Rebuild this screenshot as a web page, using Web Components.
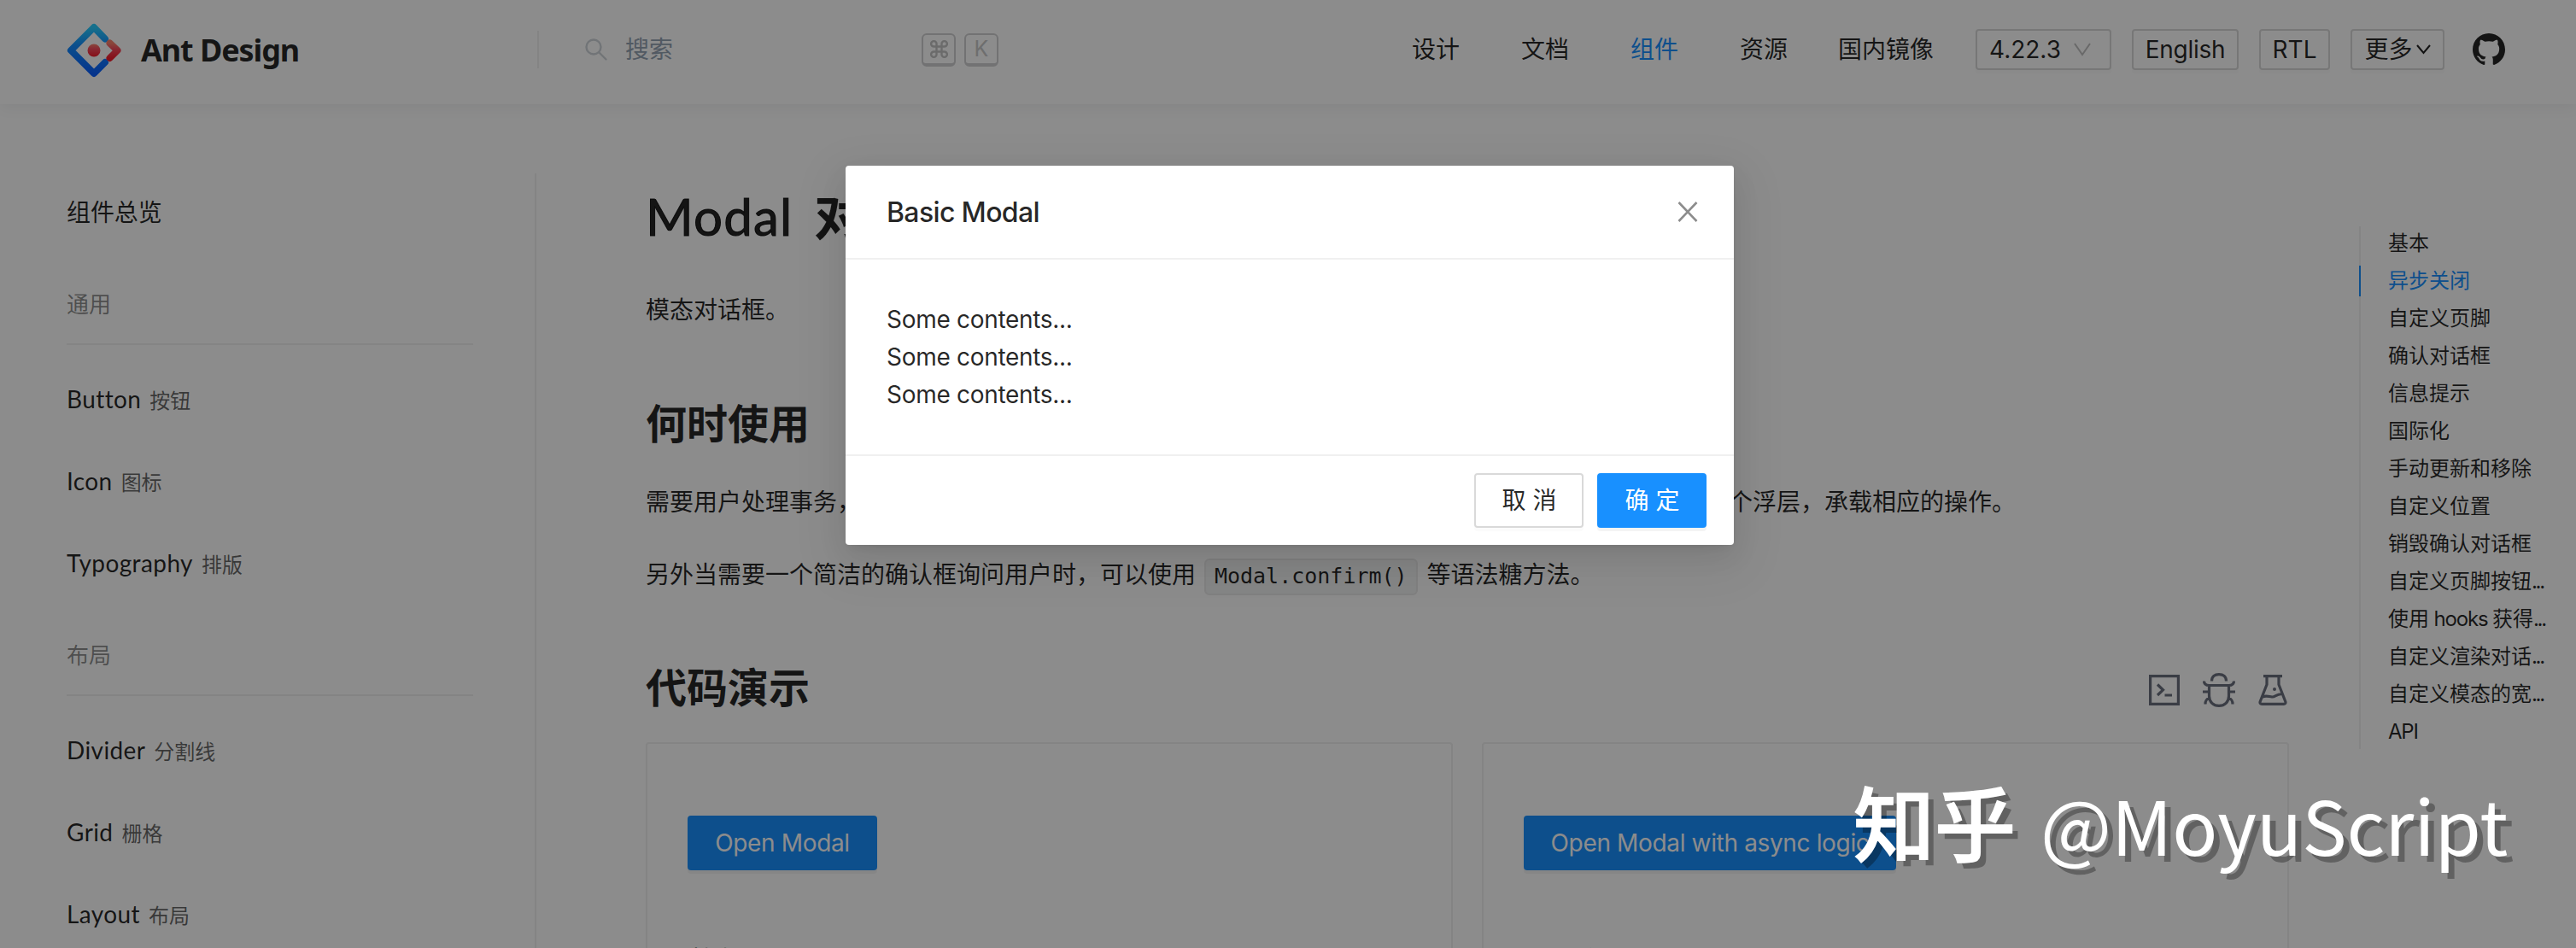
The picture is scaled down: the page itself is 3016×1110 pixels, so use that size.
<!DOCTYPE html>
<html lang="zh-CN">
<head>
<meta charset="utf-8">
<title>Modal 对话框 - Ant Design</title>
<style>
    html, body {
        margin: 0;
        height: 1110px;
        overflow: hidden;
        background: #fff;
    }
    body {
        position: relative;
        font-family: Inter, "Noto Sans CJK SC", sans-serif;
        font-size: 28px;
        line-height: 44px;
        color: rgba(0, 0, 0, .85);
    }
</style>
</head>
<body>
<docs-page></docs-page>
<modal-mask>
    <basic-modal>
        <span slot="title">Basic Modal</span>
        <div>Some contents...</div>
        <div>Some contents...</div>
        <div>Some contents...</div>
    </basic-modal>
</modal-mask>
<water-mark></water-mark>

<script>
const define = (name, html, setup) => {
    const template = document.createElement("template")
    template.innerHTML = html
    customElements.define(name, class extends HTMLElement {
        constructor() {
            super()
            this.attachShadow({ mode: "open" })
            this.shadowRoot.appendChild(template.content.cloneNode(true))
        }
        connectedCallback() {
            if (setup) setup(this, this.shadowRoot)
        }
    })
}

/* ---------- header ---------- */

define("site-logo", /*html*/`
<style>
    :host {
        display: flex;
        align-items: center;
        width: 551px;
        padding: 2px 0 0 78px;
        box-sizing: content-box;
        font: 700 36px/60px "Noto Sans", sans-serif;
        letter-spacing: -1.1px;
    }
    svg { margin-right: 23px; }
</style>
<svg width="64" height="64" viewBox="0 0 64 64" fill="none" stroke-width="8" stroke-linecap="round" stroke-linejoin="round">
    <defs>
        <linearGradient id="b" x1="0" y1="0" x2="0" y2="1">
            <stop offset="0" stop-color="#29cdff"/>
            <stop offset=".4" stop-color="#148eff"/>
            <stop offset="1" stop-color="#0a60ff"/>
        </linearGradient>
        <linearGradient id="r" x1="0" y1="0" x2="0" y2="1">
            <stop offset="0" stop-color="#fa816e"/>
            <stop offset=".4" stop-color="#f74a5c"/>
            <stop offset="1" stop-color="#f51d2c"/>
        </linearGradient>
    </defs>
    <path stroke="url(#b)" d="M45 18.500L32 5 5 32l27 27L45 46"/>
    <path stroke="url(#r)" d="M50.500 23.500L59.500 32 50.500 41"/>
    <circle cx="32" cy="32" r="7.500" fill="url(#r)"/>
</svg>
<slot></slot>
`)

define("search-box", /*html*/`
<style>
    :host {
        display: flex;
        align-items: center;
        width: 540px;
        height: 44px;
        border-left: 2px solid #f0f0f0;
        box-sizing: border-box;
        padding-left: 54px;
        color: #94a3b3;
    }
    span { margin-left: 21px; flex: 1; }
    kbd {
        width: 40px;
        height: 39px;
        margin-left: 10px;
        box-sizing: border-box;
        border: 2px solid #d0d0d2;
        border-bottom-width: 4px;
        border-radius: 6px;
        display: flex;
        align-items: center;
        justify-content: center;
        font: 25px/30px Inter, sans-serif;
        color: #c8c8c8;
    }
</style>
<svg width="26" height="26" viewBox="0 0 26 26" fill="none" stroke="#ced4d9" stroke-width="2.400" stroke-linecap="round">
    <circle cx="10" cy="10" r="8.500"/><path d="M16.500 16.500L24.500 24.500"/>
</svg>
<span><slot></slot></span>
<kbd><svg width="21" height="21" viewBox="0 0 21 21" fill="none" stroke="#c4c4c4" stroke-width="2.400"><path d="M7.500 7.500h6v6h-6zM7.500 7.500H4.700a3.200 3.200 0 1 1 2.800-2.800zM13.500 7.500h2.800a3.200 3.200 0 1 0-2.800-2.800zM7.500 13.500H4.700a3.200 3.200 0 1 0 2.800 2.800zM13.500 13.500h2.800a3.200 3.200 0 1 1-2.800 2.800z"/></svg></kbd>
<kbd>K</kbd>
`)

define("nav-link", /*html*/`
<style>
    :host { display: block; }
    :host([active]) { color: #1890ff; }
</style>
<slot></slot>
`)

define("ghost-button", /*html*/`
<style>
    :host {
        display: flex;
        align-items: center;
        justify-content: center;
        gap: 4px;
        height: 48px;
        box-sizing: border-box;
        border: 2px solid #d9d9d9;
        border-radius: 4px;
        box-shadow: 0 4px 0 rgba(0, 0, 0, .015);
        white-space: nowrap;
    }
</style>
<slot></slot>
`)

define("site-header", /*html*/`
<style>
    :host {
        display: flex;
        align-items: center;
        height: 122px;
        padding-bottom: 6px;
        box-sizing: border-box;
        box-shadow: 0 4px 16px #f0f1f2;
        position: relative;
        background: #fff;
    }
    nav {
        display: flex;
        gap: 72px;
        margin-left: 484px;
        width: 660px;
    }
    nav nav-link:last-child { margin-left: -13px; }
    .tools { display: flex; align-items: center; gap: 24px; }
    .github { margin-left: 9px; }
    .version { width: 159px; gap: 15px; padding-right: 8px; }
    .lang { width: 125px; letter-spacing: -.3px; }
    .rtl { width: 83px; }
    .more { width: 110px; }
</style>
<site-logo>Ant Design</site-logo>
<search-box>搜索</search-box>
<nav>
    <nav-link>设计</nav-link>
    <nav-link>文档</nav-link>
    <nav-link active>组件</nav-link>
    <nav-link>资源</nav-link>
    <nav-link>国内镜像</nav-link>
</nav>
<div class="tools">
    <ghost-button class="version">4.22.3
        <svg width="20" height="16" viewBox="0 0 20 16" fill="none" stroke="#bfbfbf" stroke-width="2"><path d="M1 1l9 13 9-13"/></svg>
    </ghost-button>
    <ghost-button class="lang">English</ghost-button>
    <ghost-button class="rtl">RTL</ghost-button>
    <ghost-button class="more">更多
        <svg width="17" height="12" viewBox="0 0 17 12" fill="none" stroke="#222" stroke-width="2"><path d="M1 1l7.500 9L16 1"/></svg>
    </ghost-button>
    <svg class="github" width="38" height="38" viewBox="0 0 16 16" fill="#262626"><path d="M8 0C3.580 0 0 3.580 0 8c0 3.540 2.290 6.530 5.470 7.590.4.070.55-.17.55-.38 0-.19-.01-.82-.01-1.490-2.010.37-2.530-.49-2.690-.94-.09-.23-.48-.94-.82-1.130-.28-.15-.68-.52-.01-.53.63-.01 1.080.58 1.230.82.72 1.210 1.870.87 2.330.66.070-.52.28-.87.51-1.070-1.780-.2-3.640-.89-3.640-3.950 0-.87.31-1.590.82-2.150-.08-.2-.36-1.020.08-2.120 0 0 .67-.21 2.200.82a7.600 7.600 0 0 1 4 0c1.530-1.040 2.200-.82 2.200-.82.44 1.100.16 1.920.08 2.120.51.56.82 1.270.82 2.150 0 3.070-1.870 3.750-3.650 3.950.29.25.54.73.54 1.480 0 1.070-.01 1.930-.01 2.200 0 .21.15.46.55.38A8.010 8.010 0 0 0 16 8c0-4.420-3.580-8-8-8z"/></svg>
</div>
`)

/* ---------- side menu ---------- */

define("menu-group", /*html*/`
<style>
    :host {
        display: block;
        height: 100px;
        box-sizing: border-box;
        margin: 0 72px 23px 0;
        padding-top: 31px;
        border-bottom: 2px solid #f0f0f0;
        font-size: 26px;
        color: rgba(0, 0, 0, .45);
    }
</style>
<slot></slot>
`)

define("menu-item", /*html*/`
<style>
    :host {
        display: block;
        height: 80px;
        margin-bottom: 16px;
        font: 28px/80px Lato, "Noto Sans CJK SC", sans-serif;
        letter-spacing: .4px;
    }
    small { font-size: 24px; letter-spacing: 0; opacity: .7; margin-left: 10px; }
</style>
<slot></slot><small></small>
`, (el, root) => {
    root.querySelector("small").textContent = el.getAttribute("cn") || ""
})

define("side-menu", /*html*/`
<style>
    :host {
        display: block;
        width: 628px;
        height: 920px;
        box-sizing: border-box;
        padding: 5px 0 0 78px;
        border-right: 2px solid #f0f0f0;
    }
    menu-item.first { letter-spacing: -.1px; }
</style>
<menu-item class="first">组件总览</menu-item>
<menu-group>通用</menu-group>
<menu-item cn="按钮">Button</menu-item>
<menu-item cn="图标">Icon</menu-item>
<menu-item cn="排版">Typography</menu-item>
<menu-group>布局</menu-group>
<menu-item cn="分割线">Divider</menu-item>
<menu-item cn="栅格">Grid</menu-item>
<menu-item cn="布局">Layout</menu-item>
`)

/* ---------- buttons, demo cards ---------- */

define("ant-button", /*html*/`
<style>
    :host {
        display: inline-flex;
        align-items: center;
        justify-content: center;
        height: 64px;
        padding: 0 30px;
        box-sizing: border-box;
        border: 2px solid #d9d9d9;
        border-radius: 4px;
        box-shadow: 0 4px 0 rgba(0, 0, 0, .015);
        background: #fff;
        white-space: nowrap;
    }
    :host([primary]) {
        border-color: #1890ff;
        background: #1890ff;
        color: #fff;
        box-shadow: 0 4px 0 rgba(0, 0, 0, .045);
    }
</style>
<slot></slot>
`)

define("demo-card", /*html*/`
<style>
    :host {
        display: block;
        height: 400px;
        box-sizing: border-box;
        border: 2px solid #f0f0f0;
        border-radius: 4px;
        padding: 84px 47px 0;
    }
    ant-button { display: flex; width: var(--button-width); letter-spacing: -.35px; }
    .title { margin: 83px 0 0 2px; }
</style>
<ant-button primary><slot></slot></ant-button>
<div class="title"></div>
`, (el, root) => {
    root.querySelector(".title").textContent = el.getAttribute("name")
})

define("demo-tools", /*html*/`
<style>
    :host { display: flex; align-items: center; gap: 26px; height: 40px; padding: 4px 3px 0 0; }
    svg { fill: none; stroke: #6a6f7e; stroke-width: 3.200; }
</style>
<svg width="36" height="36" viewBox="0 0 36 36"><path d="M1.600 1.600h32.800v32.800H1.600zM10 11.500l6.500 6.300L10 24M18.500 24h8.500"/></svg>
<svg width="40" height="40" viewBox="0 0 40 40"><path d="M11.500 9.500C11.500 4 15 1.600 20 1.600S28.500 4 28.500 9.500M8.500 14.500h23v12.500c0 7-5 11.400-11.500 11.400S8.500 34 8.500 27zM2.500 9.500c0 3 2 5 6 5M37.500 9.500c0 3-2 5-6 5M1 22h7.500M31.500 22H39M4 36.500c0-4.500 1.500-6 5-7.500M36 36.500c0-4.500-1.500-6-5-7.500"/></svg>
<svg width="34" height="36" viewBox="0 0 34 36"><path d="M6 1.600h22M10 1.600v9.900L2.200 31.500c-.6 1.800.3 2.900 2 2.900h25.600c1.700 0 2.600-1.100 2-2.900L24 11.500V1.600M5 26c4-2 7-.5 11 0s6-4.500 13-3"/><circle cx="19" cy="17" r="1" stroke-width="2"/></svg>
`)

define("doc-article", /*html*/`
<style>
    :host { display: block; width: 1925px; margin-left: 128px; padding-top: 12px; }
    h1, h2, p { margin: 0; }
    h1 { font: 700 60px/76px Lato, "Noto Sans CJK SC", sans-serif; height: 76px; word-spacing: 10px; }
    h1 span { font-weight: 400; letter-spacing: 1.2px; -webkit-text-stroke: 1px; }
    p { white-space: nowrap; height: 56px; line-height: 56px; }
    h2 { font-size: 48px; line-height: 64px; font-weight: 700; }
    .intro { margin-top: 44px; }
    .when { margin: 74px 0 31px; }
    .more { margin-top: 29px; }
    code {
        display: inline-block;
        height: 43px;
        line-height: 38px;
        box-sizing: border-box;
        margin: 0 3px 0 2px;
        padding: 0 10px;
        border: 2px solid #e9e9e9;
        border-radius: 6px;
        background: #f2f4f5;
        font-family: "DejaVu Sans Mono", monospace;
        font-size: 25px;
    }
    .heading { display: flex; align-items: center; justify-content: space-between; margin-top: 73px; height: 64px; }
    .demos { display: grid; grid-template-columns: 945px 945px; gap: 34px; margin-top: 31px; }
</style>
<h1><span>Modal</span> 对话框</h1>
<p class="intro">模态对话框。</p>
<h2 class="when">何时使用</h2>
<p>需要用户处理事务，又不希望跳转页面以致打断工作流程时，可以使用 <code>Modal</code> 在当前页面正中打开一个浮层，承载相应的操作。</p>
<p class="more">另外当需要一个简洁的确认框询问用户时，可以使用 <code>Modal.confirm()</code> 等语法糖方法。</p>
<div class="heading"><h2>代码演示</h2><demo-tools></demo-tools></div>
<div class="demos">
    <demo-card name="基本" style="--button-width:222px">Open Modal</demo-card>
    <demo-card name="异步关闭" style="--button-width:436px">Open Modal with async logic</demo-card>
</div>
`)

/* ---------- anchor ---------- */

define("doc-anchor", /*html*/`
<style>
    :host {
        display: block;
        margin: 62px 0 0 81px;
        width: 253px;
        height: 612px;
        padding-top: 2px;
        box-sizing: border-box;
        border-left: 2px solid #f0f0f0;
        font-size: 24px;
    }
    a {
        display: block;
        height: 36px;
        line-height: 36px;
        margin: 0 0 8px -2px;
        padding: 0 0 0 32px;
        border-left: 2px solid transparent;
        white-space: nowrap;
    }
    a.active { color: #1890ff; border-color: #1890ff; }
    .latin { letter-spacing: -1.200px; }
    .dots { letter-spacing: -2.300px; }
</style>
<div id="links"></div>
`, (el, root) => {
    const links = ["基本", "异步关闭", "自定义页脚", "确认对话框", "信息提示", "国际化", "手动更新和移除", "自定义位置",
        "销毁确认对话框", "自定义页脚按钮...", "使用 hooks 获得...", "自定义渲染对话...", "自定义模态的宽...", "API"]
    links.forEach((text, i) => {
        const a = document.createElement("a")
        // latin runs are set a little tighter than the chinese ones
        a.innerHTML = text
            .replace(/ ?[A-Za-z]+ ?/g, (m) => `<span class="latin">${m}</span>`)
            .replace("...", `<span class="dots">...</span>`)
        if (i === 1) a.className = "active"
        root.querySelector("#links").appendChild(a)
    })
})

define("docs-page", /*html*/`
<style>
    :host { display: block; height: 1110px; overflow: hidden; }
    main { display: flex; align-items: flex-start; padding-top: 81px; }
    doc-article, side-menu, doc-anchor { flex: none; }
</style>
<site-header></site-header>
<main>
    <side-menu></side-menu>
    <doc-article></doc-article>
    <doc-anchor></doc-anchor>
</main>
`)

/* ---------- overlay ---------- */

define("modal-mask", /*html*/`
<style>
    :host {
        position: absolute;
        inset: 0;
        display: flex;
        justify-content: center;
        align-items: flex-start;
        padding: 194px 0 0 4px;
        background: rgba(0, 0, 0, .45);
    }
</style>
<slot></slot>
`)

define("basic-modal", /*html*/`
<style>
    :host {
        display: block;
        width: 1040px;
        border-radius: 4px;
        background: #fff;
        box-shadow: 0 6px 12px -8px rgba(0, 0, 0, .12), 0 12px 32px rgba(0, 0, 0, .08), 0 18px 56px 16px rgba(0, 0, 0, .05);
    }
    header {
        display: flex;
        align-items: center;
        justify-content: space-between;
        height: 110px;
        box-sizing: border-box;
        padding: 0 42px 0 48px;
        border-bottom: 2px solid #f0f0f0;
        font-size: 32px;
        font-weight: 500;
        letter-spacing: -.65px;
    }
    header slot { display: block; padding-top: 1px; }
    section { padding: 48px; letter-spacing: -.3px; }
    footer {
        display: flex;
        justify-content: flex-end;
        gap: 16px;
        padding: 20px 32px;
        border-top: 2px solid #f0f0f0;
    }
    footer ant-button { width: 128px; padding: 0 0 0 1px; }
</style>
<header>
    <slot name="title"></slot>
    <svg width="24" height="26" viewBox="0 0 24 26" fill="none" stroke="#8c8c8c" stroke-width="2.600"><path d="M1.500 2l21 22M22.500 2l-21 22"/></svg>
</header>
<section><slot></slot></section>
<footer>
    <ant-button>取 消</ant-button>
    <ant-button primary>确 定</ant-button>
</footer>
`)

define("water-mark", /*html*/`
<style>
    :host {
        position: absolute;
        left: 2170px;
        top: 897px;
        display: flex;
        align-items: baseline;
        gap: 29px;
        font: 400 87.800px/128px "Noto Sans CJK SC", sans-serif;
        color: #fff;
        text-shadow: 7px 7px 0 rgba(0, 0, 0, .3);
        white-space: nowrap;
    }
    b { font-weight: 500; font-size: 95px; -webkit-text-stroke: 1.500px #fff; }
</style>
<b>知乎</b><span>@MoyuScript</span>
`)
</script>
</body>
</html>
